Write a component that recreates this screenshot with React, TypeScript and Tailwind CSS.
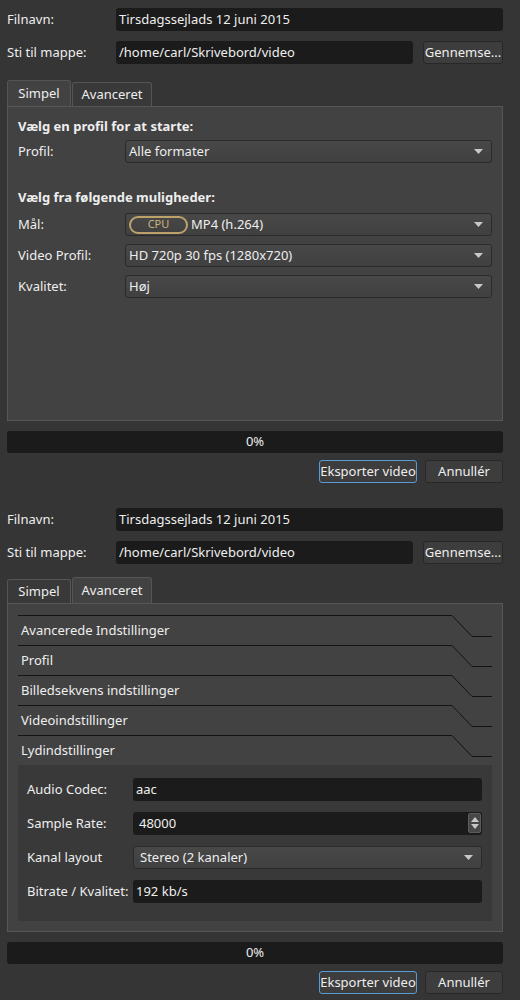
import React from 'react';

const font = { fontFamily: '"Noto Sans", "Open Sans", sans-serif' };

function TextField({ value, spin = false }: { value: string; spin?: boolean }) {
  return (
    <div className="relative flex h-[23px] flex-1 items-center rounded-[3px] bg-[#1b1b1b] px-[3px] text-[#eeeeee]">
      <span className={spin ? 'pl-[3px]' : ''}>{value}</span>
      {spin && (
        <div className="absolute right-[1px] top-[1px] flex h-[20px] w-[13px] flex-col items-center justify-center gap-[2px] rounded-[2px] border border-[#5c5c5c] bg-[#474747]">
          <svg width="8" height="5" viewBox="0 0 8 5"><path d="M0 5 L4 0 L8 5 Z" fill="#c8c8c8" /></svg>
          <svg width="8" height="5" viewBox="0 0 8 5"><path d="M0 0 L4 5 L8 0 Z" fill="#c8c8c8" /></svg>
        </div>
      )}
    </div>
  );
}

function Combo({ children }: { children: React.ReactNode }) {
  return (
    <div className="flex h-[23px] flex-1 items-center rounded-[3px] border border-[#2a2a2a] bg-gradient-to-b from-[#484848] to-[#404040] pl-[3px] pr-[8px] text-[#eeeeee]">
      <div className="flex flex-1 items-center">{children}</div>
      <svg width="9" height="5" viewBox="0 0 9 5"><path d="M0 0 L4.5 5 L9 0 Z" fill="#c8c8c8" /></svg>
    </div>
  );
}

function Button({ label, primary = false, w }: { label: string; primary?: boolean; w: string }) {
  return (
    <div
      className={`flex h-[23px] items-center justify-center rounded-[3px] border bg-[#3d3d3d] text-[#eeeeee] ${w} ${
        primary ? 'border-[#5a9ad6]' : 'border-[#272727]'
      }`}
    >
      {label}
    </div>
  );
}

function Tabs({ active }: { active: 'simpel' | 'avanceret' }) {
  const tab = (name: string, on: boolean, w: string) => (
    <div
      className={`flex items-center justify-center rounded-t-[3px] border border-b-0 border-[#555] ${w} ${
        on ? 'h-[26px] bg-[#424242]' : 'h-[24px] bg-[#393939]'
      }`}
    >
      {name}
    </div>
  );
  return (
    <div className="flex items-end gap-[1px]">
      {tab('Simpel', active === 'simpel', 'w-[64px]')}
      {tab('Avanceret', active === 'avanceret', 'w-[80px]')}
    </div>
  );
}

function FileRows() {
  return (
    <div className="flex flex-col gap-[10px]">
      <div className="flex items-center">
        <span className="w-[109px]">Filnavn:</span>
        <TextField value="Tirsdagssejlads 12 juni 2015" />
      </div>
      <div className="flex items-center">
        <span className="w-[109px]">Sti til mappe:</span>
        <TextField value="/home/carl/Skrivebord/video" />
        <div className="ml-[10px]">
          <Button label="Gennemse..." w="w-[80px]" />
        </div>
      </div>
    </div>
  );
}

function SimpleTab() {
  const row = (label: string, content: React.ReactNode) => (
    <div className="flex items-center">
      <span className="w-[107px]">{label}</span>
      <Combo>{content}</Combo>
    </div>
  );
  return (
    <div className="flex h-[315px] flex-col border border-[#575757] bg-[#424242] pl-[10px] pr-[10px] pt-[11px]">
      <div className="font-bold leading-[16px]">Vælg en profil for at starte:</div>
      <div className="mt-[6px]">{row('Profil:', 'Alle formater')}</div>
      <div className="mt-[26px] font-bold leading-[16px]">Vælg fra følgende muligheder:</div>
      <div className="mt-[8px] flex flex-col gap-[8px]">
        {row(
          'Mål:',
          <>
            <span className="mr-[3px] flex h-[18px] w-[59px] items-center justify-center rounded-full border-2 border-[#bca26a] text-[11px] text-[#cdb27c]">
              CPU
            </span>
            MP4 (h.264)
          </>
        )}
        {row('Video Profil:', 'HD 720p 30 fps (1280x720)')}
        {row('Kvalitet:', 'Høj')}
      </div>
    </div>
  );
}

function SectionHeader({ label }: { label: string }) {
  return (
    <div className="relative flex h-[30px] items-center pl-[3px] pt-[1px]">
      <div className="absolute left-0 right-0 top-0 flex">
        <div className="h-px flex-1 bg-[#141414]" />
        <svg width="40" height="22" viewBox="0 0 40 22" className="block">
          <polyline points="0,0.5 20,21.5 40,21.5" fill="none" stroke="#141414" strokeWidth="1" />
        </svg>
      </div>
      <span>{label}</span>
    </div>
  );
}

function AdvancedTab() {
  const row = (label: string, field: React.ReactNode) => (
    <div className="flex items-center">
      <span className="w-[106px]">{label}</span>
      {field}
    </div>
  );
  return (
    <div className="flex flex-col border border-[#575757] bg-[#424242] px-[10px] pb-[10px] pt-[11px]">
      <SectionHeader label="Avancerede Indstillinger" />
      <SectionHeader label="Profil" />
      <SectionHeader label="Billedsekvens indstillinger" />
      <SectionHeader label="Videoindstillinger" />
      <SectionHeader label="Lydindstillinger" />
      <div className="flex flex-col gap-[11px] bg-[#393939] pb-[18px] pl-[9px] pr-[10px] pt-[13px]">
        {row('Audio Codec:', <TextField value="aac" />)}
        {row('Sample Rate:', <TextField value="48000" spin />)}
        {row('Kanal layout', <Combo><span className="pl-[3px]">Stereo (2 kanaler)</span></Combo>)}
        {row('Bitrate / Kvalitet:', <TextField value="192 kb/s" />)}
      </div>
    </div>
  );
}

function ExportDialog({ active }: { active: 'simpel' | 'avanceret' }) {
  return (
    <div className="flex flex-col">
      <FileRows />
      <div className={active === 'simpel' ? 'mt-[16px]' : 'mt-[13px]'}>
        <Tabs active={active} />
        {active === 'simpel' ? <SimpleTab /> : <AdvancedTab />}
      </div>
      <div className="mt-[10px] flex h-[22px] items-center justify-center rounded-[3px] bg-[#1b1b1b] text-[#eeeeee]">
        0%
      </div>
      <div className="mt-[7px] flex justify-end gap-[8px]">
        <Button label="Eksporter video" primary w="w-[98px]" />
        <Button label="Annullér" w="w-[78px]" />
      </div>
    </div>
  );
}

export default function App() {
  return (
    <div className="min-h-screen w-[520px] bg-[#353535] text-[13px] text-[#eeeeee]" style={font}>
      <div className="flex w-[510px] flex-col gap-[25px] pl-[7px] pr-[7px] pt-[8px]">
        <ExportDialog active="simpel" />
        <ExportDialog active="avanceret" />
      </div>
    </div>
  );
}
